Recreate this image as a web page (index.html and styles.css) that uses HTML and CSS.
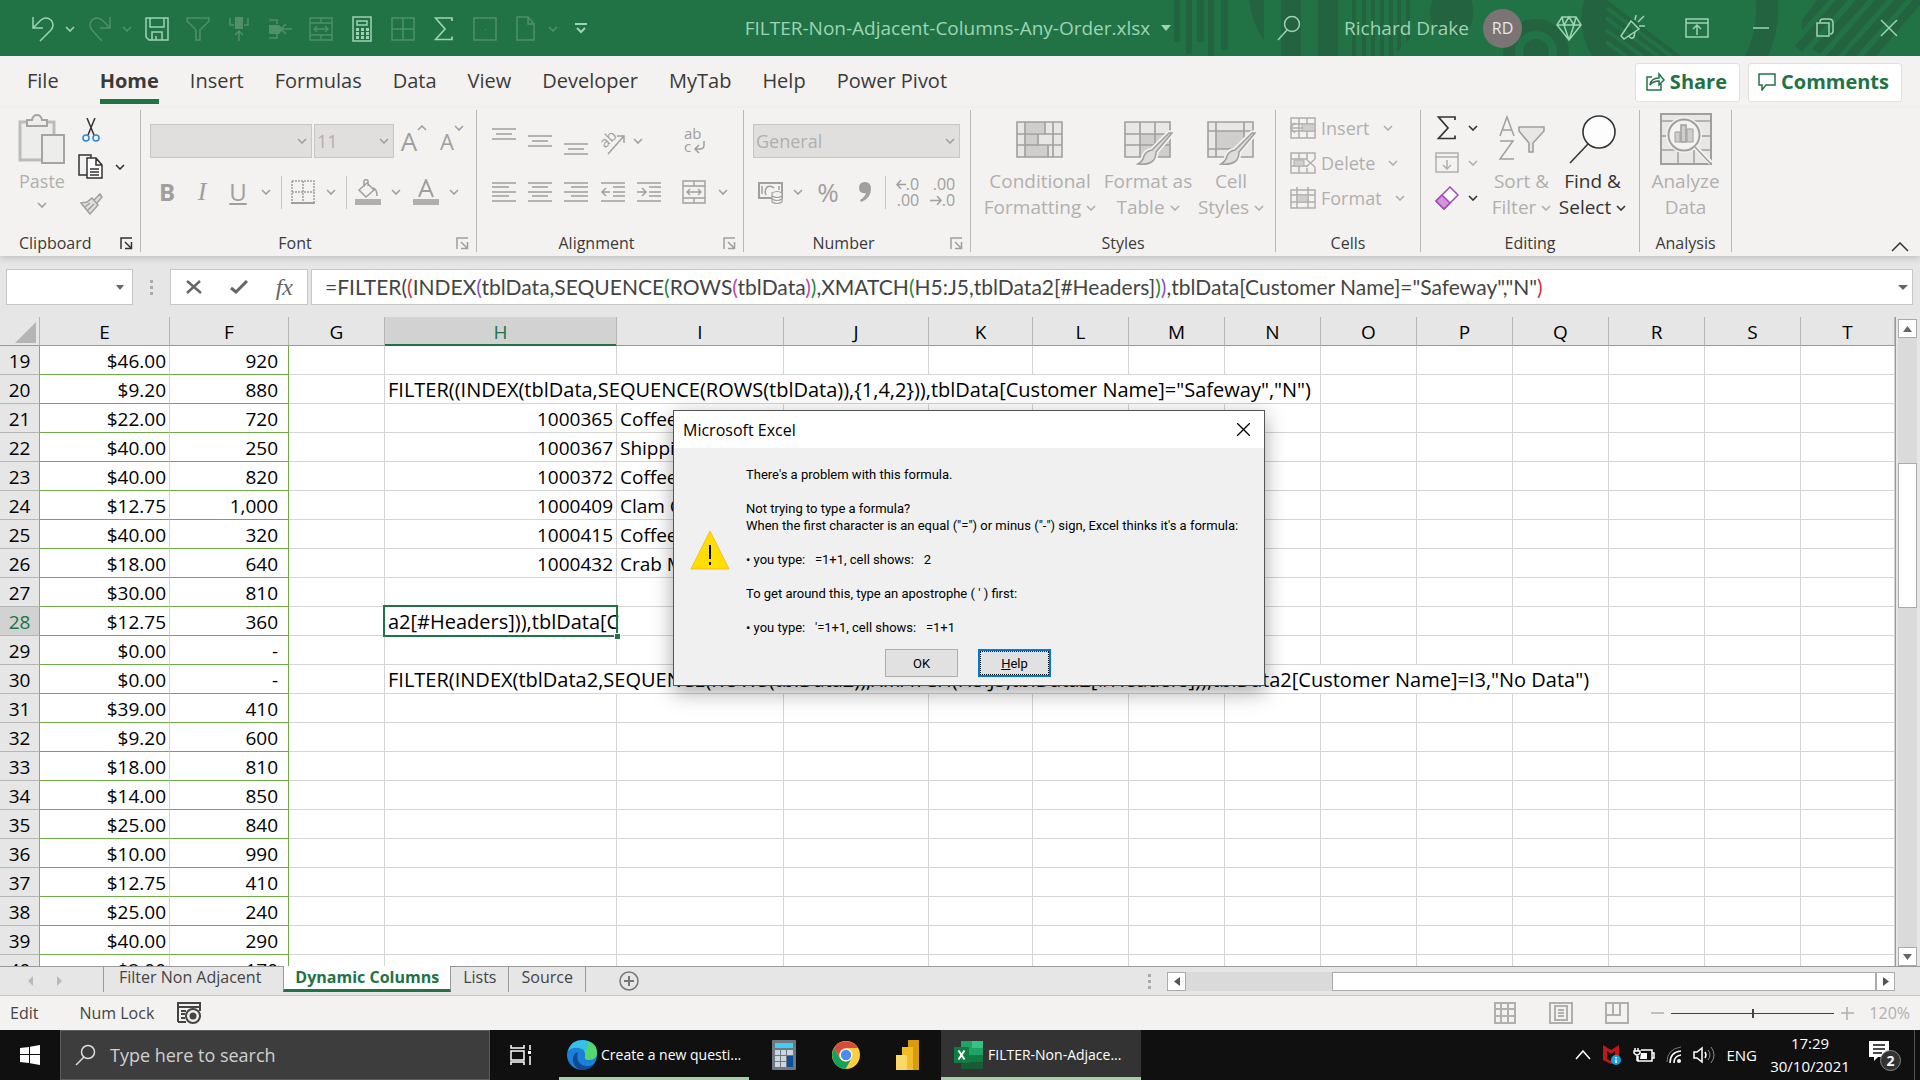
FILE: index.html
```html
<!DOCTYPE html>
<html lang="en">
<head>
<meta charset="utf-8">
<title>FILTER-Non-Adjacent-Columns-Any-Order.xlsx - Excel</title>
<link rel="stylesheet" href="styles.css">
</head>
<body>
<svg class="defs" aria-hidden="true">
  <symbol id="chev" viewBox="0 0 10 6"><path d="M1 1l4 4 4-4" fill="none" stroke="currentColor" stroke-width="1.6"/></symbol>
  <symbol id="launch" viewBox="0 0 13 13"><path d="M1 12V1h11M5 5l6 6M11.500 5v6.500H5" fill="none" stroke="currentColor" stroke-width="1.500"/></symbol>
  <symbol id="sigma" viewBox="0 0 20 24"><path d="M18 4V1H1.500L11 12 1.500 22.500H18v-3" fill="none" stroke="currentColor" stroke-width="1.700"/></symbol>
  <symbol id="merge" viewBox="0 0 24 24"><path d="M1 1h22v22H1zM1 6h22M1 18h22M12 1v5M12 18v5M5 12h14M8 9l-3 3 3 3M16 9l3 3-3 3" fill="none" stroke="currentColor" stroke-width="1.400"/></symbol>
</svg>

<header class="titlebar">
  <svg class="art" viewBox="0 0 760 56" aria-hidden="true">
    <g fill="#23633f">
      <path d="M14 0h6v42h-6zM26 0h6v54h-6zM37 0h7v42h-7zM48 0h6v56h-6zM61 0h7v50h-7zM89 0h15v40Q92 24 89 0zM121 0h20v56h-20zM158 0h20v56h-20zM192 0h4v56h-4zM202 0h4v56h-4zM211 0h4v56h-4zM220 0h4v56h-4zM229 0h4v56h-4zM237 0h4v48l-4 4zM246 0h4v38l-4 4z"/>
      <path d="M273 0h38q5 12 0 24-7 12-19 12t-19-12q-6-12 0-24zM424 0h23l74 56H432q-16-28-8-56zM596 0h22q2 30-10 56h-23q13-24 11-56z"/>
      <circle cx="376" cy="52" r="13"/>
      <path d="M657 0h12l-27 30v-10zM676 0h12l-46 52-7-6zM696 0h12l-48 54-8-5zM715 0h12l-49 56h-12zM734 0h12l-50 56h-12zM753 0h7v5l-44 51h-12z"/>
    </g>
    <circle cx="376" cy="52" r="27" fill="none" stroke="#23633f" stroke-width="12"/>
    <path d="M446 18l52 38M446 30l36 26M446 42l20 14M447 8l64 48" stroke="#217346" stroke-width="4"/>
  </svg>
  <div class="qat">
    <button aria-label="Undo"><svg width="24" height="26" viewBox="0 0 24 26"><path d="M2 1v11h10M2 12L10 4q5-4 10 0 4 5 0 10L9 25" class="ln"/></svg></button>
    <button class="qch" aria-label="Undo list"><svg width="10" height="6"><use href="#chev"/></svg></button>
    <button class="dim" disabled aria-label="Redo"><svg width="24" height="26" viewBox="0 0 24 26"><path d="M22 1v11H12M22 12L14 4Q9 0 4 4q-4 5 0 10l10 11" class="ln"/></svg></button>
    <button class="dim qch" disabled aria-label="Redo list"><svg width="10" height="6"><use href="#chev"/></svg></button>
    <button aria-label="Save"><svg width="24" height="26" viewBox="0 0 24 26"><path d="M1 2h22v22H4l-3-3zM5 2v9h14V2M7 24v-8h10v8M11 24v-4" class="ln"/></svg></button>
    <button class="dim" disabled aria-label="Filter"><svg width="24" height="26" viewBox="0 0 24 26"><path d="M1 2h22v3l-9 9v10h-4V14L1 5z" class="ln"/></svg></button>
    <button class="dim" disabled aria-label="Insert column"><svg width="24" height="26" viewBox="0 0 24 26"><path d="M3 2v7h4M21 2v7h-4M12 25V15M8 19l4-4 4 4" class="ln"/><path d="M8 1h8v12H8z" fill="currentColor"/></svg></button>
    <button class="dim" disabled aria-label="Insert row"><svg width="24" height="26" viewBox="0 0 24 26"><path d="M1 4h8v4M1 22h8v-4M24 13H13M18 8l-5 5 5 5" class="ln"/><path d="M1 9h10l4 4-4 5H1z" fill="currentColor"/></svg></button>
    <button class="dim" disabled aria-label="Merge"><svg width="24" height="24"><use href="#merge"/></svg></button>
    <button aria-label="Calculator"><svg width="20" height="26" viewBox="0 0 20 26"><path d="M1 1h18v24H1zM5 5h10v4H5z" class="ln"/><path d="M4 12h3v3H4zM9 12h3v3H9zM14 12h3v3h-3zM4 16h3v3H4zM9 16h3v3H9zM14 16h3v3h-3zM4 20h3v3H4zM9 20h3v3H9zM14 20h3v3h-3z" fill="currentColor"/></svg></button>
    <button class="dim" disabled aria-label="Borders"><svg width="24" height="26" viewBox="0 0 24 26"><path d="M1 2h22v22H1zM12 2v22M1 13h22" class="ln"/></svg></button>
    <button aria-label="AutoSum"><svg width="20" height="24"><use href="#sigma"/></svg></button>
    <button class="dim" disabled aria-label="Outline"><svg width="24" height="26" viewBox="0 0 24 26"><path d="M1 2h22v22H1z" class="ln"/><path d="M12 13h1v1h-1z" fill="currentColor"/></svg></button>
    <button class="dim" disabled aria-label="New"><svg width="20" height="26" viewBox="0 0 20 26"><path d="M1 1h11l6 7v16H1zM12 1v7h6" class="ln"/></svg></button>
    <button class="dim qch" disabled aria-label="New list"><svg width="10" height="6"><use href="#chev"/></svg></button>
    <button class="qcust" aria-label="Customize toolbar"><svg width="12" height="12" viewBox="0 0 12 12"><path d="M0 1h12M2 5l4 4 4-4" fill="none" stroke="currentColor" stroke-width="2"/></svg></button>
  </div>
  <div class="doc">FILTER-Non-Adjacent-Columns-Any-Order.xlsx<svg width="10" height="6" viewBox="0 0 10 6"><path d="M0 0h10L5 6z" fill="currentColor"/></svg></div>
  <div class="account">
    <button aria-label="Search"><svg width="24" height="26" viewBox="0 0 24 26"><circle cx="15" cy="9" r="7.500" class="ln"/><path d="M10 15L1 25" class="ln"/></svg></button>
    <span class="user">Richard Drake</span>
    <span class="avatar">RD</span>
    <button aria-label="Premium"><svg width="26" height="26" viewBox="0 0 26 26"><path d="M6 2h14l5 8-12 15L1 10zM1 10h24M13 2L8 10l5 15 5-15zM6 2l2 8M20 2l-2 8" class="ln"/></svg></button>
    <button aria-label="What's new"><svg width="26" height="26" viewBox="0 0 26 26"><path d="M11 6l8 8L4 24l-3-3zM9 21q2 4 5 1l1-5M15 5l1-5M18 7l6-6M19 11h6" class="ln"/></svg></button>
    <button aria-label="Ribbon display"><svg width="24" height="20" viewBox="0 0 24 20"><path d="M1 1h22v18H1zM1 5h22M12 17V8M8 11l4-4 4 4" class="ln"/></svg></button>
    <button aria-label="Minimize"><svg width="18" height="18" viewBox="0 0 18 18"><path d="M1 9h16" class="ln"/></svg></button>
    <button aria-label="Restore"><svg width="18" height="20" viewBox="0 0 18 20"><path d="M1 5h12v13H1zM4 4q0-3 3-3h6q4 0 4 4v8q0 3-3 3" class="ln"/></svg></button>
    <button aria-label="Close"><svg width="18" height="18" viewBox="0 0 18 18"><path d="M1 1l16 16M17 1L1 17" class="ln"/></svg></button>
  </div>
</header>

<nav class="tabs">
  <a href="#">File</a><a href="#" class="on">Home</a><a href="#">Insert</a><a href="#">Formulas</a><a href="#">Data</a><a href="#">View</a><a href="#">Developer</a><a href="#">MyTab</a><a href="#">Help</a><a href="#">Power Pivot</a>
  <div class="tabs-right">
    <button><svg width="20" height="20" viewBox="0 0 20 20"><path d="M7 5H2v13h14v-6M5 13q1-7 9-7V2l5 6-5 5V9q-6 0-9 4z" class="ln"/></svg>Share</button>
    <button><svg width="18" height="18" viewBox="0 0 18 18"><path d="M1 1h16v11H8l-4 5v-5H1z" class="ln"/></svg>Comments</button>
  </div>
</nav>

<section class="ribbon">
  <div class="group g-clip">
    <div class="body">
      <button class="big" disabled><svg width="48" height="50" viewBox="0 0 48 50"><path d="M2 8h34v38H2z" fill="#ededec" stroke="#bdbbb9" stroke-width="3"/><path d="M9 12V6h5q1-5 5-5t5 5h5v6z" fill="#ededec" stroke="#a6a4a2" stroke-width="2"/><path d="M24 21h22v28H24z" fill="#ededec" stroke="#a6a4a2" stroke-width="2"/></svg><span>Paste</span><svg class="drop" width="10" height="6"><use href="#chev"/></svg></button>
      <div class="col">
        <div class="r"><button aria-label="Cut" class="ink"><svg width="24" height="24" viewBox="0 0 24 24"><path d="M8 0l7 17M16 0L9 17" class="ln"/><g fill="none" stroke="#2b88d8" stroke-width="1.500"><circle cx="7" cy="20" r="3"/><circle cx="17" cy="20" r="3"/></g></svg></button></div>
        <div class="r"><button aria-label="Copy" class="ink"><svg width="26" height="26" viewBox="0 0 26 26"><path d="M9 21H1V1h12v3" class="ln"/><path d="M9 4h9l6 7v13H9zM18 4v7h6M12 15h9M12 18h9M12 21h9" fill="#fff" stroke="currentColor" stroke-width="1.500"/></svg></button><button class="ink" aria-label="Copy options"><svg width="10" height="6"><use href="#chev"/></svg></button></div>
        <div class="r"><button disabled aria-label="Format painter"><svg width="24" height="22" viewBox="0 0 24 22"><path d="M2 10l6-1 5-4 6 7-8 9zM15 7l6-6 2 3-5 6M6 14l5-4M9 17l6-6" fill="#e0dfde" stroke="currentColor" stroke-width="1.500"/></svg></button></div>
      </div>
    </div>
    <div class="cap"><span>Clipboard</span><button class="ink" aria-label="Clipboard settings"><svg width="13" height="13"><use href="#launch"/></svg></button></div>
  </div>

  <div class="group g-font">
    <div class="rows">
      <div class="line l-combo">
        <select disabled aria-label="Font name"><option></option></select>
        <select disabled aria-label="Font size"><option>11</option></select>
        <button disabled class="fa" aria-label="Grow font">A<svg width="10" height="6" viewBox="0 0 10 6"><path d="M1 5l4-4 4 4" class="ln"/></svg></button>
        <button disabled class="fa sm" aria-label="Shrink font">A<svg width="10" height="6"><use href="#chev"/></svg></button>
      </div>
      <div class="line l-font">
        <button disabled class="gl"><b>B</b></button><button disabled class="gl ser"><i>I</i></button><button disabled class="gl"><u>U</u></button><button disabled aria-label="Underline options"><svg width="10" height="6"><use href="#chev"/></svg></button><i class="sep"></i>
        <button disabled aria-label="Borders"><svg width="24" height="24" viewBox="0 0 24 24"><path d="M1 1h22v21M1 1v21M12 1v21M1 12h22" fill="none" stroke="currentColor" stroke-width="1.500" stroke-dasharray="2 1"/><path d="M0 23h24" stroke="currentColor" stroke-width="2"/></svg></button><button disabled aria-label="Border options"><svg width="10" height="6"><use href="#chev"/></svg></button><i class="sep"></i>
        <button disabled aria-label="Fill color"><svg width="26" height="26" viewBox="0 0 26 26"><path d="M4 11l8-7 7 7-8 7zM9 8V2q2-3 4 0v5M18 9q4 1 4 8" class="ln"/><path d="M0 20h26v6H0z" fill="#b1afad"/></svg></button><button disabled aria-label="Fill options"><svg width="10" height="6"><use href="#chev"/></svg></button>
        <button disabled aria-label="Font color"><svg width="26" height="26" viewBox="0 0 26 26"><path d="M6 18l7-17 7 17M8.500 12h9" fill="none" stroke="currentColor" stroke-width="2"/><path d="M0 20h26v6H0z" fill="#b1afad"/></svg></button><button disabled aria-label="Font color options"><svg width="10" height="6"><use href="#chev"/></svg></button>
      </div>
    </div>
    <div class="cap"><span>Font</span><button disabled aria-label="Font settings"><svg width="13" height="13"><use href="#launch"/></svg></button></div>
  </div>

  <div class="group g-align">
    <div class="body">
      <div class="rows">
        <div class="line l-align l-orient">
          <button disabled aria-label="Top align"><svg width="24" height="30" viewBox="0 0 24 30"><path d="M0 3h24M4 8h16M0 13h24" class="ln"/></svg></button>
          <button disabled aria-label="Middle align"><svg width="24" height="30" viewBox="0 0 24 30"><path d="M0 10h24M4 15h16M0 20h24" class="ln"/></svg></button>
          <button disabled aria-label="Bottom align"><svg width="24" height="30" viewBox="0 0 24 30"><path d="M0 18h24M4 23h16M0 28h24" class="ln"/></svg></button>
          <button disabled aria-label="Orientation"><svg width="26" height="28" viewBox="0 0 26 28"><text x="0" y="19" font-size="15" transform="rotate(-45 6 14)" fill="currentColor">ab</text><path d="M8 27L24 9M17 9h7v7" class="ln"/></svg></button>
          <button disabled aria-label="Orientation options"><svg width="10" height="6"><use href="#chev"/></svg></button>
        </div>
        <div class="line l-align">
          <button disabled aria-label="Align left"><svg width="24" height="22" viewBox="0 0 24 22"><path d="M0 2h24M0 6h17M0 11h24M0 15h17M0 20h24" class="ln"/></svg></button>
          <button disabled aria-label="Center"><svg width="24" height="22" viewBox="0 0 24 22"><path d="M0 2h24M4 6h16M0 11h24M4 15h16M0 20h24" class="ln"/></svg></button>
          <button disabled aria-label="Align right"><svg width="24" height="22" viewBox="0 0 24 22"><path d="M0 2h24M7 6h17M0 11h24M7 15h17M0 20h24" class="ln"/></svg></button>
          <button disabled aria-label="Decrease indent"><svg width="24" height="22" viewBox="0 0 24 22"><path d="M0 2h24M12 6h12M12 11h12M12 15h12M0 20h24M9 11H1M5 7l-4 4 4 4" class="ln"/></svg></button>
          <button disabled aria-label="Increase indent"><svg width="24" height="22" viewBox="0 0 24 22"><path d="M0 2h24M12 6h12M12 11h12M12 15h12M0 20h24M0 11h8M5 7l4 4-4 4" class="ln"/></svg></button>
        </div>
      </div>
      <i class="sep tall"></i>
      <div class="rows">
        <div class="line l-wrap"><button disabled aria-label="Wrap text"><svg width="24" height="28" viewBox="0 0 24 28"><text x="2" y="12" font-size="15" fill="currentColor">ab</text><text x="2" y="25" font-size="15" fill="currentColor">c</text><path d="M22 14v4q0 4-4 4h-5M17 18l-4 4 4 4" class="ln"/></svg></button></div>
        <div class="line l-wrap"><button disabled aria-label="Merge and center"><svg width="24" height="24"><use href="#merge"/></svg></button><button disabled aria-label="Merge options"><svg width="10" height="6"><use href="#chev"/></svg></button></div>
      </div>
    </div>
    <div class="cap"><span>Alignment</span><button disabled aria-label="Alignment settings"><svg width="13" height="13"><use href="#launch"/></svg></button></div>
  </div>

  <div class="group g-num">
    <div class="rows">
      <div class="line l-fmt"><select disabled aria-label="Number format"><option>General</option></select></div>
      <div class="line l-num">
        <button disabled aria-label="Accounting format"><svg width="26" height="26" viewBox="0 0 26 26"><path d="M1 4h23v15H1z" fill="none" stroke="currentColor" stroke-width="2"/><path d="M4 7v8M21 7v4M8 16q-2-4 1-8 4-2 7 1" class="ln"/><path d="M14 14q5-3 10 0v9q-5 3-10 0zM14 17q5 3 10 0M14 20q5 3 10 0" fill="#f3f2f1" stroke="currentColor" stroke-width="1.200"/></svg></button><button disabled aria-label="Accounting options"><svg width="10" height="6"><use href="#chev"/></svg></button>
        <button disabled class="pct">%</button><button disabled aria-label="Comma style"><svg width="14" height="20" viewBox="0 0 14 20"><path d="M7 0q6 0 6 7 0 9-10 13l-1-2q5-3 6-7-7 1-7-5 0-6 6-6z" fill="currentColor"/></svg></button><i class="sep"></i>
        <button disabled class="dec"><span><svg width="10" height="9" viewBox="0 0 10 9"><path d="M10 4.500H1M5 0L1 4.500 5 9" class="ln"/></svg>.0</span><span>.00</span></button><button disabled class="dec"><span>.00</span><span><svg width="12" height="9" viewBox="0 0 12 9"><path d="M0 4.500h11M7 0l4 4.500L7 9" class="ln"/></svg>.0</span></button>
      </div>
    </div>
    <div class="cap"><span>Number</span><button disabled aria-label="Number settings"><svg width="13" height="13"><use href="#launch"/></svg></button></div>
  </div>

  <div class="group g-style">
    <div class="body">
      <button class="big" disabled><svg width="50" height="46" viewBox="0 0 50 46"><path d="M2 2h45v35H2z" fill="#e8e7e6"/><path d="M10 2h20v11H10zM10 14h14v12H10zM10 26h24v11H10z" fill="#cfcecd"/><path d="M2 2h45v35H2zM2 14h45M2 25h45M10 2v35M38 2v35M30 2v12M23 14v11M33 25v12" fill="none" stroke="currentColor" stroke-width="1.600"/></svg><span>Conditional<br>Formatting <svg width="10" height="6"><use href="#chev"/></svg></span></button>
      <button class="big" disabled><svg width="50" height="46" viewBox="0 0 50 46"><path d="M2 2h45v35H2z" fill="#e8e7e6"/><path d="M17 14h30v23H17z" fill="#cfcecd"/><path d="M2 2h45v35H2zM2 14h45M2 25h45M17 2v35M32 2v35" fill="none" stroke="currentColor" stroke-width="1.600"/><path d="M49 13L33 32q0 14-18 12 5-3 6-8 2-5 8-6L46 13z" fill="#dddcdb" stroke="#f3f2f1" stroke-width="5"/><path d="M49 13L33 32q0 14-18 12 5-3 6-8 2-5 8-6L46 13z" fill="#dddcdb" stroke="currentColor" stroke-width="1.600"/></svg><span>Format as<br>Table <svg width="10" height="6"><use href="#chev"/></svg></span></button>
      <button class="big" disabled><svg width="50" height="46" viewBox="0 0 50 46"><path d="M2 2h45v35H2z" fill="#e8e7e6"/><path d="M10 11h28v18H10z" fill="#cfcecd"/><path d="M2 2h45v35H2zM2 11h45M2 29h36M10 2v35M38 2v27" fill="none" stroke="currentColor" stroke-width="1.600"/><path d="M49 13L33 32q0 14-18 12 5-3 6-8 2-5 8-6L46 13z" fill="#dddcdb" stroke="#f3f2f1" stroke-width="5"/><path d="M49 13L33 32q0 14-18 12 5-3 6-8 2-5 8-6L46 13z" fill="#dddcdb" stroke="currentColor" stroke-width="1.600"/></svg><span>Cell<br>Styles <svg width="10" height="6"><use href="#chev"/></svg></span></button>
    </div>
    <div class="cap"><span>Styles</span></div>
  </div>

  <div class="group g-cells">
    <div class="list">
      <button disabled><svg width="26" height="22" viewBox="0 0 26 22"><path d="M1 1h24v20H1zM9 1v20M17 1v20M1 7h24M1 14h24" class="ln"/><path d="M12 7h13v7H12z" fill="#cfcecd" stroke="currentColor"/><path d="M13 11H0M5 6l-5 5 5 5" class="ln"/></svg><span>Insert</span><svg width="10" height="6"><use href="#chev"/></svg></button>
      <button disabled><svg width="26" height="22" viewBox="0 0 26 22"><path d="M25 7V1H1v20h24v-6M9 1v20M17 1v5M17 16v5M1 7h17M1 14h17" class="ln"/><path d="M4 8h10v6H4z" fill="#cfcecd" stroke="currentColor"/><path d="M16 7l9 8M25 7l-9 8" class="ln"/></svg><span>Delete</span><svg width="10" height="6"><use href="#chev"/></svg></button>
      <button disabled><svg width="26" height="22" viewBox="0 0 26 22"><path d="M1 3h24v18H1zM7 0v21M18 0v21M1 8h24M1 15h24" class="ln"/><path d="M7 8h11v7H7z" fill="#cfcecd" stroke="currentColor"/></svg><span>Format</span><svg width="10" height="6"><use href="#chev"/></svg></button>
    </div>
    <div class="cap"><span>Cells</span></div>
  </div>

  <div class="group g-edit">
    <div class="body">
      <div class="list">
        <button class="ink" aria-label="AutoSum"><svg width="24" height="24"><use href="#sigma"/></svg><svg width="10" height="6"><use href="#chev"/></svg></button>
        <button disabled aria-label="Fill"><svg width="24" height="22" viewBox="0 0 24 22"><path d="M1 1h22v19H1zM1 5h22M12 8v9M8 13l4 4 4-4" class="ln"/></svg><svg width="10" height="6"><use href="#chev"/></svg></button>
        <button class="ink" aria-label="Clear"><svg width="24" height="24" viewBox="0 0 24 24"><path d="M15 1l8 8L9 23l-8-8z" fill="#fff" stroke="#a348b8" stroke-width="1.500"/><path d="M7 9l8 8-6 6-8-8z" fill="#d595dc" stroke="#a348b8" stroke-width="1.500"/></svg><svg width="10" height="6"><use href="#chev"/></svg></button>
      </div>
      <button class="big" disabled><svg width="48" height="46" viewBox="0 0 48 46"><path d="M2 20L9 1l7 19M4.500 14h9M2 25h13L2 43h14" class="ln"/><path d="M21 11h25v4L35 27v9h-4v-9L21 15z" fill="#e8e7e6" stroke="currentColor" stroke-width="1.600"/></svg><span>Sort &amp;<br>Filter <svg width="10" height="6"><use href="#chev"/></svg></span></button>
      <button class="big ink"><svg width="48" height="50" viewBox="0 0 48 50"><circle cx="30" cy="18" r="16" fill="#fdfdfd" stroke="currentColor" stroke-width="1.600"/><path d="M19 30L1 49" class="ln"/></svg><span>Find &amp;<br>Select <svg width="10" height="6"><use href="#chev"/></svg></span></button>
    </div>
    <div class="cap"><span>Editing</span></div>
  </div>

  <div class="group g-ana">
    <div class="body">
      <button class="big" disabled><svg width="52" height="52" viewBox="0 0 52 52"><path d="M1 1h50v50H1z" fill="#e8e7e6" stroke="currentColor" stroke-width="2"/><path d="M1 8h50M1 23h50M1 37h50M18 38v13M34 38v13" class="ln"/><circle cx="24" cy="22" r="18" fill="#f3f2f1"/><circle cx="24" cy="22" r="15.500" fill="#f3f2f1" stroke="currentColor" stroke-width="2"/><path d="M15 19h5v10h-5zM27 16h6v13h-6z" fill="#cfcecd" stroke="currentColor"/><path d="M21 12h5v17h-5z" fill="#cfcecd" stroke="currentColor" stroke-width="1.500"/><path d="M35 34l16 16" stroke="#f3f2f1" stroke-width="5"/><path d="M35 34l16 17" class="ln"/></svg><span>Analyze<br>Data</span></button>
    </div>
    <div class="cap"><span>Analysis</span></div>
  </div>
  <button class="collapse ink" aria-label="Collapse ribbon"><svg width="18" height="10" viewBox="0 0 18 10"><path d="M1 9l8-8 8 8" class="ln"/></svg></button>
</section>

<section class="fbar">
  <button class="namebox" aria-label="Name box"><svg width="8" height="5" viewBox="0 0 8 5"><path d="M0 0h8L4 5z" fill="currentColor"/></svg></button>
  <i class="dots"></i>
  <div class="fbtns">
    <button aria-label="Cancel"><svg width="16" height="14" viewBox="0 0 16 14"><path d="M1 1l14 12M14 1L1 13" fill="none" stroke="currentColor" stroke-width="2.400"/></svg></button>
    <button aria-label="Enter"><svg width="18" height="14" viewBox="0 0 18 14"><path d="M1 8l5 4L17 1" fill="none" stroke="currentColor" stroke-width="3"/></svg></button>
    <button aria-label="Insert function" class="fx"><i>fx</i></button>
  </div>
  <div class="formula" contenteditable="true" role="textbox" aria-label="Formula bar">=FILTER(<span class="c1">(</span>INDEX<span class="c2">(</span>tblData,SEQUENCE<span class="c3">(</span>ROWS<span class="c4">(</span>tblData<span class="c4">)</span><span class="c3">)</span>,XMATCH<span class="c3">(</span>H5:J5,tblData2[#Headers]<span class="c3">)</span><span class="c2">)</span>,tblData[Customer Name]="Safeway","N"<span class="c1">)</span></div>
  <button class="expand" aria-label="Expand formula bar"><svg width="10" height="7" viewBox="0 0 10 7"><path d="M0 1l5 5 5-5z" fill="currentColor"/></svg></button>
</section>

<main class="sheet">
  <div class="gridwrap">
    <table class="grid">
      <colgroup><col class="w-n"><col class="w-e"><col class="w-f"><col class="w-s"><col class="w-h"><col class="w-i"><col class="w-j"><col class="w-k"><col class="w-s"><col class="w-s"><col class="w-s"><col class="w-s"><col class="w-s"><col class="w-s"><col class="w-s"><col class="w-s"><col></colgroup>
      <thead><tr id="heads"></tr></thead>
      <tbody id="rows"></tbody>
    </table>
  </div>
  <div class="vscroll">
    <button aria-label="Scroll up"><svg width="9" height="6" viewBox="0 0 9 6"><path d="M0 6h9L4.500 0z" fill="currentColor"/></svg></button>
    <div class="track"><div class="thumb"></div></div>
    <button aria-label="Scroll down"><svg width="9" height="6" viewBox="0 0 9 6"><path d="M0 0h9L4.500 6z" fill="currentColor"/></svg></button>
  </div>
</main>

<section class="sheettabs">
  <button class="nav" disabled aria-label="Previous sheet"><svg width="5" height="10" viewBox="0 0 5 10"><path d="M5 0v10L0 5z" fill="currentColor"/></svg></button>
  <button class="nav" disabled aria-label="Next sheet"><svg width="5" height="10" viewBox="0 0 5 10"><path d="M0 0v10l5-5z" fill="currentColor"/></svg></button>
  <div class="stabs"><a href="#" class="first">Filter Non Adjacent</a><a href="#" class="on">Dynamic Columns</a><a href="#" class="div">Lists</a><a href="#" class="div">Source</a></div>
  <button class="add" aria-label="New sheet"><svg width="20" height="20" viewBox="0 0 20 20"><circle cx="10" cy="10" r="9" class="ln"/><path d="M10 5v10M5 10h10" fill="none" stroke="currentColor" stroke-width="2"/></svg></button>
  <i class="dots"></i>
  <div class="hscroll">
    <button aria-label="Scroll left"><svg width="6" height="9" viewBox="0 0 6 9"><path d="M6 0v9L0 4.500z" fill="currentColor"/></svg></button>
    <div class="track"><div class="thumb"></div></div>
    <button aria-label="Scroll right"><svg width="6" height="9" viewBox="0 0 6 9"><path d="M0 0v9l6-4.500z" fill="currentColor"/></svg></button>
  </div>
</section>

<footer class="status">
  <span class="mode">Edit</span><span>Num Lock</span>
  <button aria-label="Record macro" class="macro"><svg width="24" height="22" viewBox="0 0 24 22"><path d="M1 20V1h22v8M1 20h8M1 5h22M4 9h5M4 12h4M4 16h4" fill="none" stroke="currentColor" stroke-width="2"/><circle cx="16" cy="14" r="7" fill="none" stroke="currentColor" stroke-width="2"/><circle cx="16" cy="14" r="3.500" fill="currentColor"/></svg></button>
  <div class="views">
    <button disabled aria-label="Normal view"><svg width="24" height="22" viewBox="0 0 24 22"><path d="M2 1h20v20H2zM2 7h20M2 14h20M8 1v20M15 1v20" class="vl"/></svg></button>
    <button disabled aria-label="Page layout"><svg width="24" height="22" viewBox="0 0 24 22"><path d="M1 1h22v20H1zM6 4h12v14H6zM9 8h6M9 11h6M9 14h6" class="vl"/></svg></button>
    <button disabled aria-label="Page break preview"><svg width="24" height="22" viewBox="0 0 24 22"><path d="M1 1h22v20H1zM1 13h14V1M8 1v12" class="vl"/></svg></button>
  </div>
  <div class="zoom"><button disabled aria-label="Zoom out"><svg width="13" height="13" viewBox="0 0 13 13"><path d="M0 6h13" class="ln"/></svg></button><input type="range" min="0" max="100" value="50" aria-label="Zoom"><button disabled aria-label="Zoom in"><svg width="13" height="13" viewBox="0 0 13 13"><path d="M0 6h13M6 0v13" class="ln"/></svg></button><span>120%</span></div>
</footer>

<footer class="taskbar">
  <button class="start" aria-label="Start"><svg width="20" height="20" viewBox="0 0 20 20"><path d="M0 3l9-1v7H0zM10 1.800L20 0v9H10zM0 10h9v8l-9-1zM10 10h10v10l-10-1.800z" fill="#fff"/></svg></button>
  <label class="search"><svg width="22" height="22" viewBox="0 0 22 22"><circle cx="13" cy="8" r="6.500" class="ln"/><path d="M9 13l-8 8" class="ln"/></svg><input type="text" placeholder="Type here to search" aria-label="Type here to search"></label>
  <button class="tv" aria-label="Task view"><svg width="22" height="20" viewBox="0 0 22 20"><path d="M1 0v3h13V0M1 6h13v9H1zM1 20v-3h13v3M20 0v5M20 11v9" class="ln"/><path d="M18 6h3v3h-3z" fill="#fff"/></svg></button>
  <button class="app edge"><svg width="30" height="30" viewBox="0 0 30 30"><circle cx="15" cy="15" r="15" fill="#1b7fdc"/><path d="M1 11Q4 0 16 0q13 1 14 12 0 7-8 8-5 0-4-4 2-6-6-8Q5 7 1 11z" fill="#35c1e8"/><path d="M20 1q10 3 10 12 0 7-8 7-5 0-4-4 1-3-1-5 6-2 3-10z" fill="#53d66b"/><path d="M11 12q-3 11 7 14 5 1 9-2-5 7-13 6Q5 27 6 18q1-5 5-6z" fill="#104a92"/></svg><span>Create a new questi...</span></button>
  <button class="pin" aria-label="Calculator"><svg width="24" height="30" viewBox="0 0 24 30"><rect width="24" height="30" rx="1" fill="#6f7881"/><path d="M3 3h18v5H3z" fill="#3fd0f8"/><path d="M3 10h5v5H3zM9 10h5v5H9zM15 10h6v5h-6zM3 16h5v5H3zM9 16h5v5H9zM3 22h5v5H3zM9 22h5v5H9z" fill="#cdd6de"/><path d="M15 16h6v11h-6z" fill="#0b4f9c"/></svg></button>
  <button class="pin" aria-label="Chrome"><svg width="28" height="28" viewBox="0 0 28 28"><circle cx="14" cy="14" r="14" fill="#ffcd40"/><path d="M2 7a14 14 0 0 1 24 0H14a7 7 0 0 0-6 10z" fill="#db4a3e"/><path d="M2 7a14 14 0 0 0 11.500 21l6-10.500A7 7 0 0 1 8 17.500z" fill="#16a05d"/><circle cx="14" cy="14" r="6.500" fill="#fff"/><circle cx="14" cy="14" r="5.200" fill="#4c8bf5"/></svg></button>
  <button class="pin" aria-label="Power BI"><svg width="24" height="30" viewBox="0 0 24 30"><path d="M12 0h11v30H12z" fill="#d99a0b"/><path d="M6 7h11v23H6z" fill="#f2bd24"/><path d="M0 15h11v15H0z" fill="#fbd868"/></svg></button>
  <button class="app excel"><svg width="30" height="28" viewBox="0 0 30 28"><path d="M7 0h22v28H7z" fill="#21a366"/><path d="M18 0h11v7H18z" fill="#33c481"/><path d="M7 14h22v7H7z" fill="#107c41"/><path d="M7 21h22v7H7z" fill="#185c37"/><path d="M0 6h15v16H0z" fill="#107c41"/><path d="M4.500 9.500l6 9M10.500 9.500l-6 9" stroke="#fff" stroke-width="2"/></svg><span>FILTER-Non-Adjace...</span></button>
  <div class="tray">
    <button aria-label="Show hidden icons"><svg width="16" height="10" viewBox="0 0 16 10"><path d="M1 9l7-8 7 8" class="ln"/></svg></button>
    <button aria-label="Antivirus"><svg width="20" height="20" viewBox="0 0 20 20"><path d="M1 0l8 5 8-5v15l-8 4-8-4zM5 6v8l4 2 4-2V6L9 9z" fill="#c01818" fill-rule="evenodd"/><circle cx="14" cy="15" r="5" fill="#1ba1e2"/><path d="M14 12v1.500M14 14.500V18" stroke="#fff" stroke-width="1.500"/></svg></button>
    <button aria-label="Battery"><svg width="22" height="16" viewBox="0 0 22 16"><path d="M8 3h11v11H5V9M19 6h2v5h-2M1 4h6v2q-3 4-6 0zM2 1v3M5 1v3M4 8v6" class="ln"/><path d="M8 6h6v6H7z" fill="#fff"/></svg></button>
    <button aria-label="Network"><svg width="16" height="18" viewBox="0 0 16 18"><path d="M1 16Q1 3 15 1" fill="none" stroke="#777"/><path d="M4 17Q4 6 15 5M8 17q0-7 7-8" class="ln"/><circle cx="13" cy="15" r="2" fill="#fff"/></svg></button>
    <button aria-label="Volume"><svg width="22" height="18" viewBox="0 0 22 18"><path d="M1 6h3l5-4v14l-5-4H1zM12 6q2 3 0 6" class="ln"/><path d="M15 4q4 5 0 10M18 1q6 8 0 16" fill="none" stroke="#888"/></svg></button>
    <span class="lang">ENG</span>
    <span class="clock">17:29<br>30/10/2021</span>
    <button class="note" aria-label="Notifications"><svg width="32" height="32" viewBox="0 0 32 32"><path d="M0 2h20v16H9l-4 4v-4H0z" fill="#fff"/><path d="M4 6h12M4 10h12M4 14h9" stroke="#101010" stroke-width="1.500"/></svg><span class="badge">2</span></button>
  </div>
</footer>

<div class="dialog" role="alertdialog" aria-labelledby="dt">
  <div class="dhead"><span id="dt">Microsoft Excel</span><button aria-label="Close"><svg width="13" height="13" viewBox="0 0 13 13"><path d="M0 0l13 13M13 0L0 13" stroke="#000" stroke-width="1.300"/></svg></button></div>
  <div class="dbody">
    <svg width="40" height="40" viewBox="0 0 40 40"><path d="M20 1l19 38H1z" fill="#ffde00" stroke="#fcbc1a"/><path d="M20 15v14M20 32v3" stroke="#000" stroke-width="2"/></svg>
    <p>There's a problem with this formula.

Not trying to type a formula?
When the first character is an equal ("=") or minus ("-") sign, Excel thinks it's a formula:

• you type:   =1+1, cell shows:   2

To get around this, type an apostrophe ( ' ) first:

• you type:   '=1+1, cell shows:   =1+1</p>
  </div>
  <div class="dbtns"><button>OK</button><button class="def"><span><u>H</u>elp</span></button></div>
</div>
<script src="grid.js"></script>
</body>
</html>
```
FILE: styles.css
```css
* { box-sizing: border-box; }
body { margin: 0; height: 100vh; display: flex; flex-direction: column; overflow: hidden; background: #e6e6e6; color: #444; font: 16px/22px "Open Sans", "Noto Sans", sans-serif; }
button { border: 0; background: none; padding: 0; margin: 0; color: inherit; font: inherit; display: flex; align-items: center; justify-content: center; }
a { color: inherit; text-decoration: none; }
svg { display: block; flex: none; }
.defs { position: absolute; width: 0; height: 0; }
.ln { fill: none; stroke: currentColor; stroke-width: 1.5; }
.vl { fill: none; stroke: currentColor; stroke-width: 2; }

/* title bar */
.titlebar { position: relative; flex: none; height: 56px; background: #217346; color: #9fd3b5; display: grid; grid-template-columns: 1fr auto 1fr; align-items: center; }
.art { position: absolute; right: 0; top: 0; width: 760px; height: 56px; }
.qat { display: flex; align-items: center; padding: 2px 0 0 31px; }
.qat button { width: 24px; margin-right: 17px; }
.qat .qch { width: 12px; margin: 0 12px 0 -8px; }
.qat .qcust { width: 14px; margin-left: 3px; }
.qat .dim { color: #4f9069; }
.doc { position: relative; display: flex; align-items: center; gap: 11px; font-size: 19px; padding-right: 4px; }
.account { position: relative; display: flex; align-items: center; justify-content: flex-end; padding-right: 18px; }
.account button { width: 26px; margin-left: 38px; }
.user { font-size: 19px; margin-left: 42px; }
.avatar { width: 39px; height: 39px; border-radius: 50%; background: #7a7574; color: #e8e8e8; font-size: 16px; line-height: 39px; text-align: center; margin: 0 -4px 0 14px; }

/* ribbon tabs */
.tabs { flex: none; height: 52px; background: #f3f2f1; display: flex; align-items: center; gap: 31px; padding: 0 18px 0 27px; font-size: 20px; color: #3b3a39; }
.tabs a { line-height: 36px; border-bottom: 5px solid transparent; padding-top: 3px; }
.tabs a.on { font-weight: 700; border-color: #217346; }
.tabs-right { margin-left: auto; display: flex; gap: 8px; }
.tabs-right button { height: 39px; padding: 0 12px 0 9px; gap: 5px; background: #fff; border: 1px solid #e1dfdd; border-radius: 3px; color: #217346; font-weight: 700; }
.tabs a:first-child { margin-right: 10px; }

/* ribbon groups */
.ribbon { flex: none; height: 148px; background: #f3f2f1; display: flex; padding-top: 2px; color: #a19f9d; position: relative; box-shadow: 0 3px 6px rgba(0,0,0,.14); }
.ribbon .ink { color: #333; }
.group { height: 142px; border-right: 1px solid #bab8b6; display: flex; flex-direction: column; flex: none; }
.g-clip { width: 141px; } .g-font { width: 336px; } .g-align { width: 267px; } .g-num { width: 227px; }
.g-style { width: 305px; } .g-cells { width: 145px; } .g-edit { width: 219px; } .g-ana { width: 92px; }
.body { display: flex; flex: 1; }
.cap { display: grid; grid-template-columns: 1fr auto 1fr; height: 18px; line-height: 18px; align-items: center; color: #3b3a39; }
.cap span { grid-column: 2; }
.cap:has(button) { grid-template-columns: 1fr auto 1fr 20px; padding-right: 7px; }
.cap button { grid-column: 4; justify-self: end; color: #a19f9d; }
.g-clip .cap:has(button) { grid-template-columns: auto 1fr; }
.g-clip .cap span { grid-column: 1; padding-left: 19px; }
.g-clip .cap button { grid-column: 2; }
.big { flex-direction: column; justify-content: flex-start; font-size: 19px; line-height: 26px; color: #b1afad; white-space: nowrap; }
.big > svg { height: 58px; color: #a19f9d; }
.big.ink > svg { color: #333; }
.g-style .big > svg { padding-top: 8px; }
.g-clip .big { width: 78px; padding: 0 0 0 6px; font-size: 18px; }
.g-clip .big .drop { height: 6px; margin-top: 8px; }
.col { display: flex; flex-direction: column; gap: 8px; padding-top: 5px; }
.r { display: flex; height: 29px; gap: 11px; align-items: center; }
.r button:first-child { width: 26px; }
.big span svg { display: inline-block; vertical-align: 3px; }
.rows { display: flex; flex-direction: column; flex: 1; }
.g-font .rows, .g-num .rows { padding: 14px 9px 0; }
.line { display: grid; height: 34px; align-items: center; justify-items: center; margin-bottom: 17px; justify-content: start; }
.l-combo { grid-template-columns: 162px 80px 36px 36px; column-gap: 2px; }
.l-font { grid-template-columns: 34px 36px 36px 20px 10px 33px 23px 8px 36px 20px 40px 16px; }
.l-align { grid-template-columns: 36px 36px 36px 38px 34px; }
.l-orient { grid-template-columns: 36px 36px 36px 38px 12px; }
.l-wrap { grid-template-columns: 36px 22px; }
.l-num { grid-template-columns: 36px 18px 42px 31px 10px 35px 35px; }
.l-fmt { grid-template-columns: 207px; }
.g-align .body { padding: 14px 9px 0; }
.g-align .body .rows { flex: none; }
.sep { width: 1px; height: 33px; background: #c8c6c4; }
.sep.tall { height: 100px; margin: -7px 5px 0; }
select { appearance: none; width: 100%; height: 34px; border: 1px solid #c8c6c4; border-radius: 0; background-color: #e1dfdd; color: #b1afad; font: 18px/30px "Open Sans", sans-serif; padding: 0 2px; opacity: 1;
  background-image: url("data:image/svg+xml,%3Csvg xmlns='http://www.w3.org/2000/svg' width='10' height='6'%3E%3Cpath d='M1 1l4 4 4-4' fill='none' stroke='%23a19f9d' stroke-width='1.6'/%3E%3C/svg%3E"); background-repeat: no-repeat; background-position: right 4px center; }
.fa { font-size: 26px; align-items: flex-start; line-height: 32px; }
.fa.sm { font-size: 22px; }
.gl { font-size: 24px; line-height: 30px; }
.ser { font-family: "Liberation Serif", serif; font-size: 26px; }
.pct { font-size: 26px; }
.dec { font-size: 16px; line-height: 16px; flex-direction: column; align-items: flex-end; }
.dec span { display: flex; align-items: center; }
.g-style .body { padding-left: 12px; gap: 8px; }
.g-style .big:nth-child(2) { width: 86px; }
.g-style .body .big:first-child { width: 114px; }
.g-style .body .big:last-child { width: 64px; }
.list { display: flex; flex-direction: column; flex: 1; padding-left: 14px; color: #b1afad; font-size: 18px; }
.list button { height: 35px; gap: 5px; justify-content: flex-start; }
.list svg + span { margin-right: 8px; }
.g-edit .list { flex: none; width: 65px; }
.g-edit .list button { gap: 9px; }
.g-edit .big { width: 71px; }
.g-ana .big { width: 92px; }
.collapse { margin: auto 11px 4px auto; }

/* formula bar */
.fbar { flex: none; height: 61px; padding: 13px 7px 12px 6px; display: flex; color: #666; }
.namebox { width: 127px; background: #fff; border: 1px solid #c6c6c6; justify-content: flex-end; padding-right: 8px; }
.dots { width: 3px; height: 15px; margin: auto 17px; background: repeating-linear-gradient(#aaa 0 3px, transparent 3px 6px); }
.fbtns { width: 138px; background: #fff; border: 1px solid #c6c6c6; display: flex; }
.fbtns button { flex: 1; }
.fx { font: 24px "Liberation Serif", serif; }
.formula { flex: 1; margin-left: 3px; background: #fff; border: 1px solid #c6c6c6; border-right: 0; padding-left: 13px; font: 21px/34px Lato, sans-serif; color: #444; white-space: nowrap; overflow: hidden; }
.expand { width: 20px; background: #fff; border: 1px solid #c6c6c6; border-left: 0; }
.c1 { color: #d13438; } .c2 { color: #8a4fd0; } .c3 { color: #1e8a3c; } .c4 { color: #c843a8; }

/* worksheet */
.sheet { flex: 1; min-height: 0; display: flex; }
.gridwrap { flex: 1; overflow: hidden; border-right: 1px solid #999; }
.grid { table-layout: fixed; width: 100%; border-collapse: separate; border-spacing: 0; font: 19px/26px "Open Sans", sans-serif; color: #000; background: #fff; }
.grid th, .grid td { height: 29px; padding: 2px 3px 0; border-right: 1px solid #d4d4d4; border-bottom: 1px solid #d4d4d4; white-space: nowrap; overflow: hidden; }
.grid th { background: #e6e6e6; font-weight: 400; border-right-color: #b5b5b5; padding: 2px 0 0; }
.grid thead th { border-bottom-color: #999; }
.grid tbody th { border-right-color: #999; border-bottom-color: #b5b5b5; }
.grid .sel { background: #d2d2d2; color: #217346; }
.grid thead .sel { box-shadow: inset 0 -1px #217346; border-bottom-color: #217346; }
.grid .num { text-align: right; border-bottom-color: #70ad47; }
.grid .qty { padding-right: 10px; border-right-color: #70ad47; }
.grid .id { text-align: right; }
.grid .txt { font-size: 20px; }
.grid .act { overflow: visible; position: relative; }
.act::after { content: ""; position: absolute; inset: -2px; border: 2px solid #217346; }
.act::before { content: ""; position: absolute; right: -4px; bottom: -4px; width: 5px; height: 5px; background: #217346; outline: 1px solid #fff; z-index: 1; }
.w-n { width: 40px; } .w-e { width: 130px; } .w-f { width: 119px; } .w-s { width: 96px; } .w-h { width: 232px; } .w-i { width: 167px; } .w-j { width: 145px; } .w-k { width: 104px; }
.corner { width: 21px; height: 21px; margin: 0 3px 0 auto; display: block; }
.track { flex: 1; background: #dadada; display: flex; }
.thumb { background: #fff; border: 1px solid #ababab; }
.vscroll { width: 24px; padding: 2px 3px 0 2px; display: flex; flex-direction: column; color: #666; }
.vscroll button { height: 19px; background: #fff; border: 1px solid #ababab; }
.vscroll .track { padding-top: 125px; }
.vscroll .thumb { width: 100%; height: 145px; }

/* sheet tabs */
.sheettabs { flex: none; height: 30px; border-top: 1px solid #999; border-bottom: 1px solid #c6c6c6; display: flex; align-items: center; padding-right: 25px; color: #444; }
.nav { width: 5px; margin-left: 28px; color: #b9b9b9; }
.nav + .nav { margin-left: 24px; }
.stabs { display: flex; align-self: flex-start; margin: 0 0 0 41px; border-left: 1px solid #999; }
.stabs a { line-height: 21px; height: 25px; padding: 0 13px; }
.stabs .first { padding: 0 22px 0 15px; }
.stabs .on { background: #fff; color: #217346; font-weight: 700; border: solid #999; border-width: 0 1px; border-bottom: 3px solid #217346; margin-top: -1px; height: 26px; padding: 0 11px; line-height: 23px; }
.stabs .div { border-right: 1px solid #999; padding: 0 12px; }
.add { margin-left: 33px; color: #777; }
.sheettabs .dots { margin: 0 16px 0 auto; }
.hscroll { width: 728px; height: 19px; display: flex; color: #555; }
.hscroll button { width: 19px; background: #fff; border: 1px solid #ababab; }
.hscroll .track { padding-left: 146px; }
.hscroll .thumb { flex: 1; }

/* status bar */
.status { flex: none; height: 34px; background: #f3f2f1; display: flex; align-items: center; padding: 0 10px; color: #444; }
.mode { margin-right: 41px; }
.macro { margin-left: 23px; }
.views { margin-left: auto; display: flex; gap: 32px; color: #b1afad; }
.zoom { display: flex; align-items: center; margin-left: 22px; color: #b1afad; width: 259px; }
.zoom span { margin-left: auto; }
.zoom input { appearance: none; width: 163px; height: 14px; margin: 0 7px; background: linear-gradient(#444,#444) center/100% 1px no-repeat; }
.zoom input::-webkit-slider-thumb { appearance: none; width: 2px; height: 9px; background: #444; }

/* taskbar */
.taskbar { flex: none; height: 50px; background: #101010; display: flex; color: #fff; font-size: 15px; }
.start { width: 60px; }
.search { width: 430px; background: #3d3d3d; border: 1px solid #5c5c5c; display: flex; align-items: center; gap: 13px; padding-left: 14px; color: #ddd; }
.search input { flex: 1; border: 0; background: none; padding: 0; font: 18px/24px "Open Sans", sans-serif; }
.search input::placeholder { color: #d0d0d0; }
.tv { width: 61px; margin-right: 8px; }
.app { justify-content: flex-start; gap: 4px; border-bottom: 3px solid #a3cfa8; padding-top: 2px; white-space: nowrap; font-size: 14px; }
.edge { width: 190px; padding-left: 8px; }
.pin { width: 62px; }
.edge + .pin { margin-left: 4px; }
.excel { width: 200px; padding-left: 13px; background: #333; margin-left: 2px; }
.tray { margin-left: auto; display: flex; align-items: center; gap: 11px; padding-right: 13px; border-right: 1px solid #555; margin-right: 5px; }
.clock { width: 84px; text-align: center; line-height: 23px; }
.note { position: relative; width: 32px; margin-left: 6px; }
.badge { position: absolute; right: 0; bottom: 0; width: 21px; height: 21px; border: 1px solid #888; border-radius: 50%; background: #333; font: 700 14px/19px "Open Sans", sans-serif; }

/* message box */
.dialog { position: absolute; left: 673px; top: 410px; width: 592px; background: #f0f0f0; border: 1px solid #555; box-shadow: 0 6px 20px rgba(0,0,0,.35); color: #000; font: 13px/17px Roboto, sans-serif; }
.dhead { height: 37px; background: #fff; display: flex; align-items: center; justify-content: space-between; padding: 0 14px 0 9px; font: 16px "Open Sans", sans-serif; }
.dbody { display: flex; align-items: center; padding: 18px 0 0 16px; gap: 16px; }
.dbody p { margin: 0; white-space: pre; }
.dbody svg { margin-top: -3px; }
.dbtns { display: flex; gap: 20px; padding: 13px 0 8px 211px; }
.dbtns button { width: 73px; height: 28px; background: #e1e1e1; border: 1px solid #adadad; }
.dbtns .def { border: 2px solid #0078d7; outline: 1px dotted #000; outline-offset: -3px; }
```
FILE: grid.js
```js
var heads = ['E', 'F', 'G', 'H', 'I', 'J', 'K', 'L', 'M', 'N', 'O', 'P', 'Q', 'R', 'S', 'T'];

var prices = ['$46.00', '$9.20', '$22.00', '$40.00', '$40.00', '$12.75', '$40.00', '$18.00', '$30.00', '$12.75', '$0.00',
  '$0.00', '$39.00', '$9.20', '$18.00', '$14.00', '$25.00', '$10.00', '$12.75', '$25.00', '$40.00', '$2.00'];
var units = ['920', '880', '720', '250', '820', '1,000', '320', '640', '810', '360', '-',
  '-', '410', '600', '810', '850', '840', '990', '410', '240', '290', '170'];

// Cells to the right of column G: text, columns spanned, class.
var cells = {
  20: [['FILTER((INDEX(tblData,SEQUENCE(ROWS(tblData)),{1,4,2})),tblData[Customer Name]="Safeway","N")', 7, 'txt']],
  21: [['1000365', 1, 'id'], ['Coffee', 1, '']],
  22: [['1000367', 1, 'id'], ['Shipping', 1, '']],
  23: [['1000372', 1, 'id'], ['Coffee', 1, '']],
  24: [['1000409', 1, 'id'], ['Clam Chowder', 1, '']],
  25: [['1000415', 1, 'id'], ['Coffee', 1, '']],
  26: [['1000432', 1, 'id'], ['Crab Meat', 1, '']],
  28: [['a2[#Headers])),tblData[C', 1, 'txt act']],
  30: [['FILTER(INDEX(tblData2,SEQUENCE(ROWS(tblData2)),XMATCH(H5:J5,tblData2[#Headers])),tblData2[Customer Name]=I3,"No Data")', 10, 'txt']]
};

function add(row, tag, text, cls, span) {
  var c = document.createElement(tag);
  c.textContent = text;
  if (cls) c.className = cls;
  if (span > 1) c.colSpan = span;
  row.appendChild(c);
  return c;
}

var headRow = document.getElementById('heads');
add(headRow, 'th', '').innerHTML = '<svg class="corner" viewBox="0 0 21 21"><path d="M21 0v21H0z" fill="#b5b5b5"/></svg>';
heads.forEach(function (h) { add(headRow, 'th', h, h === 'H' ? 'sel' : ''); });

var body = document.getElementById('rows');
prices.forEach(function (p, i) {
  var n = 19 + i, tr = document.createElement('tr'), used = 0;
  add(tr, 'th', n, n === 28 ? 'sel' : '');
  add(tr, 'td', p, 'num');
  add(tr, 'td', units[i], 'num qty');
  add(tr, 'td', '');
  (cells[n] || []).forEach(function (c) { add(tr, 'td', c[0], c[2], c[1]); used += c[1]; });
  for (; used < 13; used++) add(tr, 'td', '');
  body.appendChild(tr);
});
```
